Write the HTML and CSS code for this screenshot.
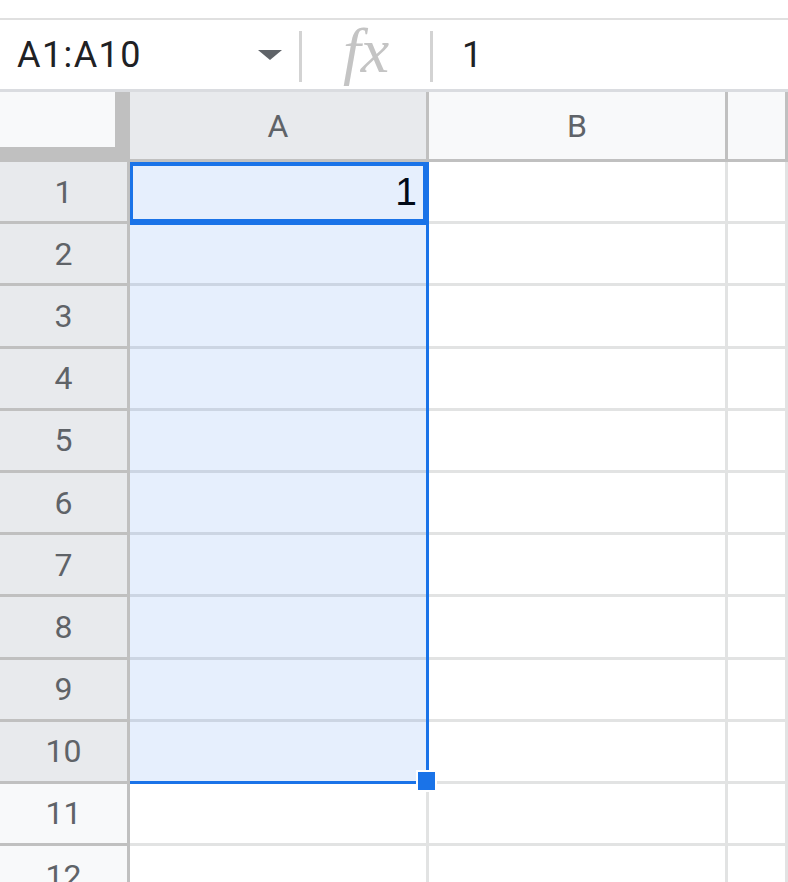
FILE: index.html
```html
<!DOCTYPE html>
<html lang="en">
<head>
    <meta charset="UTF-8">
    <title>Sheet</title>
    <link rel="stylesheet" href="styles.css">
</head>
<body>
    <div class="topbar"></div>

    <!-- name box + formula input -->
    <div class="formula-bar">
        <div class="name-box">
            <span class="range-name">A1:A10</span>
            <svg class="caret" viewBox="0 0 24 10"><polygon points="0,0 24,0 12,10" fill="#5f6368"/></svg>
        </div>
        <div class="divider"></div>
        <div class="fx">fx</div>
        <div class="divider"></div>
        <div class="formula-value">1</div>
    </div>

    <div class="grid">
        <div class="corner"><div class="corner-box"></div></div>
        <div class="col-head selected">A</div>
        <div class="col-head">B</div>
        <div class="col-head"></div>

        <div class="row-head selected">1</div><div class="cell value">1</div><div class="cell"></div><div class="cell"></div>
        <div class="row-head selected">2</div><div class="cell"></div><div class="cell"></div><div class="cell"></div>
        <div class="row-head selected">3</div><div class="cell"></div><div class="cell"></div><div class="cell"></div>
        <div class="row-head selected">4</div><div class="cell"></div><div class="cell"></div><div class="cell"></div>
        <div class="row-head selected">5</div><div class="cell"></div><div class="cell"></div><div class="cell"></div>
        <div class="row-head selected">6</div><div class="cell"></div><div class="cell"></div><div class="cell"></div>
        <div class="row-head selected">7</div><div class="cell"></div><div class="cell"></div><div class="cell"></div>
        <div class="row-head selected">8</div><div class="cell"></div><div class="cell"></div><div class="cell"></div>
        <div class="row-head selected">9</div><div class="cell"></div><div class="cell"></div><div class="cell"></div>
        <div class="row-head selected">10</div><div class="cell"></div><div class="cell"></div><div class="cell"></div>
        <div class="row-head">11</div><div class="cell"></div><div class="cell"></div><div class="cell"></div>
        <div class="row-head">12</div><div class="cell"></div><div class="cell"></div><div class="cell"></div>

        <!-- selection A1:A10 drawn over the cells -->
        <div class="range"></div>
        <div class="active-cell"></div>
        <div class="fill-handle"></div>
    </div>
</body>
</html>
```

FILE: styles.css
```css
:root {
    --blue: #1a73e8;
    --head-line: #c0c0c0;
    --grid-line: #e2e3e3;
    --head-bg: #f8f9fa;
    --head-selected: #e8eaed;
    --head-text: #5f6368;
}
body {
    margin: 0;
    background: white;
    overflow: hidden;
    font-family: Roboto, "Liberation Sans", sans-serif;
}
.topbar {
    height: 18px;
    border-bottom: 2px solid #e0e0e0;
}
.formula-bar {
    display: flex;
    align-items: center;
    height: 69px;
    border-bottom: 3px solid #dadce0;
}
.name-box {
    width: 299px;
    height: 100%;
    display: flex;
    align-items: center;
    box-sizing: border-box;
    padding-left: 17px;
}
.range-name {
    font-size: 36px;
    letter-spacing: 1.4px;
    color: #202124;
    flex: 1;
}
.caret {
    width: 24px;
    height: 10px;
    margin-right: 17px;
}
.divider {
    width: 3px;
    height: 51px;
    margin-top: 3px;
    background: #d3d3d3;
}
.fx {
    width: 128px;
    text-align: center;
    font-family: "Liberation Serif", serif;
    font-style: italic;
    font-size: 64px;
    color: #c4c4c4;
    line-height: 1;
    margin-top: -8px;
}
.formula-value {
    padding-left: 29px;
    font-size: 36px;
    color: #202124;
}
.grid {
    position: relative;
    display: grid;
    grid-template-columns: 130px 299px 299px 1fr;
    grid-template-rows: 70px;
    grid-auto-rows: 62.2px;
}
.grid > div {
    box-sizing: border-box;
}
.corner {
    background: var(--head-line);
}
.corner-box {
    width: 115px;
    height: 55px;
    background: var(--head-bg);
}
.col-head {
    display: flex;
    align-items: center;
    justify-content: center;
    background: var(--head-bg);
    border-right: 3px solid var(--head-line);
    border-bottom: 3px solid var(--head-line);
    font-size: 32px;
    color: var(--head-text);
}
.row-head {
    display: flex;
    align-items: center;
    justify-content: center;
    background: var(--head-bg);
    border-right: 3px solid var(--head-line);
    border-bottom: 3px solid var(--head-line);
    font-size: 32px;
    color: var(--head-text);
}
.col-head.selected,
.row-head.selected {
    background: var(--head-selected);
}
.cell {
    border-right: 3px solid var(--grid-line);
    border-bottom: 3px solid var(--grid-line);
}
.cell.value {
    display: flex;
    align-items: center;
    justify-content: flex-end;
    padding-right: 9px;
    font-family: "Liberation Sans", Arial, sans-serif;
    font-size: 39px;
    color: #000;
}
.range {
    position: absolute;
    left: 130px;
    top: 70px;
    width: 299px;
    height: 622px;
    box-sizing: border-box;
    border-right: 3px solid var(--blue);
    border-bottom: 3px solid var(--blue);
    background: rgba(14, 101, 235, 0.1);
}
.active-cell {
    position: absolute;
    left: 130px;
    top: 70px;
    width: 299px;
    height: 63px;
    box-sizing: border-box;
    border-style: solid;
    border-color: var(--blue);
    border-width: 4px 6px 6px 3px;
}
.fill-handle {
    position: absolute;
    left: 416px;
    top: 678px;
    width: 21px;
    height: 22px;
    box-sizing: border-box;
    background: var(--blue);
    border: 2px solid white;
}
```
